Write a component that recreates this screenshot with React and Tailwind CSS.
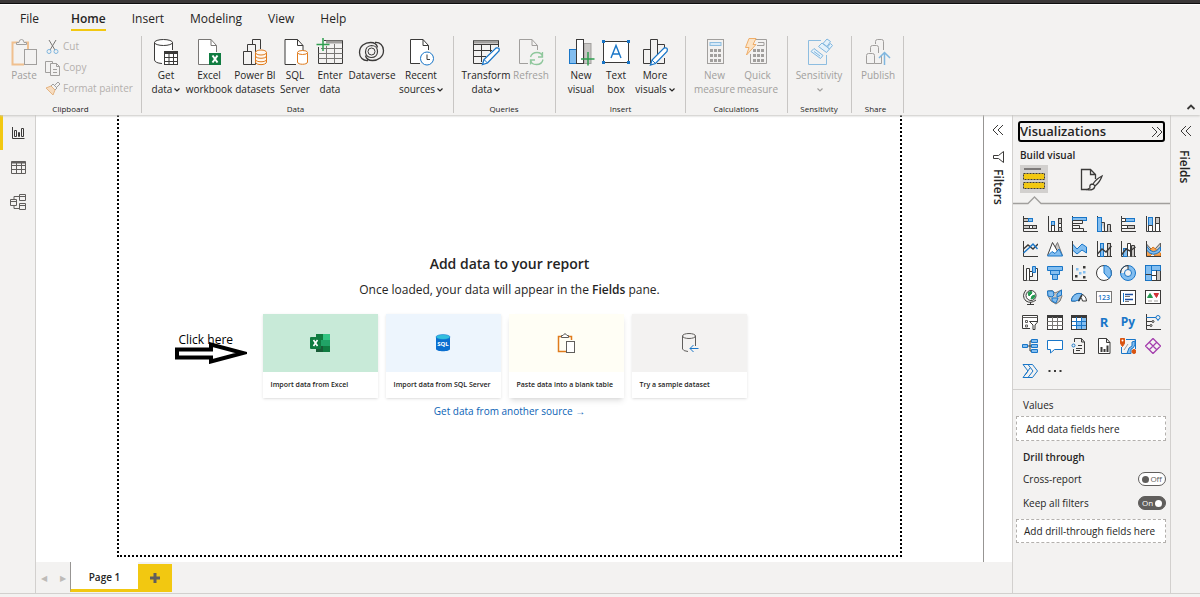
import { useState } from "react";

const K = "#3b3a39";
const B = "#1976c8";
const L = "#83bef0";
const G = "#c8c6c4";
const O = "#e07b1c";

const Icon = ({ size = 28, className = "", children }) => (
  <svg
    xmlns="http://www.w3.org/2000/svg"
    viewBox={`0 0 ${size} ${size}`}
    width={size}
    height={size}
    fill="none"
    stroke={K}
    className={`shrink-0 ${className}`}
    aria-hidden="true"
  >
    {children}
  </svg>
);

const swirl = "M10 22.500C5 23 1.500 19.500 1.500 14.500C1.500 8 7 4.500 12.500 4.500C17 4.500 19 7 19.500 9.500";

const ribbonIcons = {
  paste: (
    <Icon>
      <path d="M8.500 4.500H2.500V26.500H14M18 11V4.500H15" stroke="#f0c08f" strokeWidth="2" />
      <path d="M6.500 6.500V4.500H9Q9 1.500 11.500 1.500T14 4.500H16.500V6.500Z" fill="#f3f2f1" stroke="#a19f9d" />
      <rect x="14.500" y="11.500" width="12" height="15" fill="#f3f2f1" stroke="#a19f9d" />
    </Icon>
  ),
  getData: (
    <Icon>
      <path d="M2.500 4.500V22Q3 25 10 25.500H20.500V4.500" fill="white" stroke="none" />
      <ellipse cx="11.500" cy="4.500" rx="9" ry="3" fill="white" />
      <path d="M2.500 4.500V22Q3 25 10 25.500M20.500 4.500V12" />
      <rect x="12.500" y="13.500" width="13" height="13" fill="white" />
      <path d="M12.500 15H25.500" strokeWidth="2" />
      <path d="M12.500 19.500H25.500M12.500 23.500H25.500M17 15V26.500M21.500 15V26.500" />
    </Icon>
  ),
  excel: (
    <Icon>
      <path d="M21.500 14V7.500L16 1.500H3.500V26.500H14M16 1.500V7.500H21.500" stroke="#797775" fill="white" />
      <rect x="14" y="15" width="12" height="12" fill="#107c41" stroke="none" />
      <path d="M17.500 17.500L22.500 24.500M22.500 17.500L17.500 24.500" stroke="white" strokeWidth="2" />
    </Icon>
  ),
  datasets: (
    <Icon>
      <path d="M11.500 6.500V1.500H19.500V11M6.500 13V6.500H14.500V26.500H2.500V13.500H10.500V26" />
      <path d="M14.500 14.500V24C14.500 27.500 25.500 27.500 25.500 24V14.500" fill="#fff8f0" stroke={O} />
      <ellipse cx="20" cy="14.500" rx="5.500" ry="2.500" fill="#fff8f0" stroke={O} />
      <path d="M14.500 18C14.500 21 25.500 21 25.500 18M14.500 21.500C14.500 24.500 25.500 24.500 25.500 21.500" stroke={O} />
    </Icon>
  ),
  sql: (
    <Icon>
      <path d="M22 16V7.500L16.500 1.500H4V26.500H15M16.500 1.500V7.500H22" fill="white" />
      <path d="M16.500 14.500V24C16.500 27 26.500 27 26.500 24V14.500" fill="white" stroke={O} />
      <ellipse cx="21.500" cy="14.500" rx="5" ry="2" fill="white" stroke={O} />
    </Icon>
  ),
  enter: (
    <Icon>
      <path d="M8 2.500H26.500V25.500H2.500V9" />
      <path d="M10 4H26" stroke="#a19f9d" strokeWidth="3" />
      <path d="M5 10.500H26.500M2.500 15.500H26.500M2.500 20.500H26.500M10.500 8V25.500M18.500 6V25.500" stroke="#797775" />
      <path d="M0.500 6.500H13.500M7 0V13" stroke="#2f9e4f" strokeWidth="1.500" />
    </Icon>
  ),
  dataverse: (
    <Icon>
      <path d={swirl} strokeWidth="1.300" />
      <path d={swirl} transform="rotate(180 13.500 13.500)" strokeWidth="1.300" />
      <path d="M13.500 19.500C5.500 20 5.500 8 13.500 7.500C17 7.500 19.500 10 19.500 13.500C19.500 17 17 19.500 13.500 19.500" strokeWidth="1.200" />
      <circle cx="13.500" cy="13.500" r="3.500" />
    </Icon>
  ),
  recent: (
    <Icon>
      <path d="M21.500 12V7.500L16 1.500H3.500V25.500H13M16 1.500V7.500H21.500" fill="white" />
      <circle cx="20" cy="20.500" r="6.500" fill="white" stroke={B} />
      <path d="M20 16.500V21.500H23" />
    </Icon>
  ),
  transform: (
    <Icon>
      <path d="M26.500 9V2.500H1.500V25.500H10" />
      <path d="M2 4H26" stroke="#a19f9d" strokeWidth="3" />
      <path d="M1.500 6.500H26.500M1.500 12.500H20M1.500 18.500H14M9.500 6V24M18.500 6V14" />
      <path d="M10.500 26.500L12 21.500L24 10Q28 9 27 13L15.500 25Z" fill="white" stroke={B} strokeWidth="1.300" />
      <path d="M12 21.500L15.500 25" stroke={B} />
    </Icon>
  ),
  refresh: (
    <Icon>
      <path d="M20.500 12V7.500L15 1.500H2.500V25.500H11M15 1.500V7.500H20.500" stroke="#a19f9d" />
      <path d="M13.500 19Q15 14.500 20 14.500T25.500 19M25.500 14V19H21M26 21.500Q25 26.500 19.500 26.500T14 22.500M13.500 26.500V22H18" stroke="#8fc79c" strokeWidth="1.300" />
    </Icon>
  ),
  newVisual: (
    <Icon>
      <rect x="2.500" y="11.500" width="7" height="14" fill={L} stroke={B} />
      <rect x="17" y="5.500" width="7" height="20" fill={G} stroke="#a19f9d" />
      <rect x="9.500" y="1.500" width="7" height="24" fill="white" />
      <path d="M14 21H27.500M21 14V27.500" stroke="#2f9e4f" strokeWidth="1.500" />
    </Icon>
  ),
  textBox: (
    <Icon>
      <rect x="1.500" y="3.500" width="25" height="21" fill="white" />
      <path d="M9 20L14 7.500L19 20M10.500 16H17.500" stroke={B} strokeWidth="1.400" />
      <path d="M0 2h3v3H0zM25 2h3v3h-3zM0 23h3v3H0zM25 23h3v3h-3z" fill={B} stroke="none" />
    </Icon>
  ),
  more: (
    <Icon>
      <path d="M9 11.500H2.500V25.500H9.500M17 6.500H23.500V12M9.500 25.500V1.500H16.500V16M23.500 20V25.500H16" />
      <path d="M9.500 27L11 22L23 10Q27.500 9 26 13.500L14.500 25.500Z" fill="white" stroke={B} strokeWidth="1.300" />
      <path d="M11 22L14.500 25.500" stroke={B} />
    </Icon>
  ),
  newMeasure: (
    <Icon>
      <rect x="6.500" y="1.500" width="16" height="24" stroke="#a19f9d" />
      <rect x="9" y="4.500" width="11" height="3" fill="#d5e9f8" stroke="#8dbde0" />
      <path d="M9 12.500H20M9 17.500H20M9 22.500H20" stroke="#a19f9d" strokeWidth="3" strokeDasharray="3 1" />
    </Icon>
  ),
  quick: (
    <Icon>
      <path d="M11 1.500H22.500V25.500H6.500V16M14 4.500H20V7.500H13" stroke="#a19f9d" />
      <path d="M9 12.500H20M9 17.500H20M9 22.500H20" stroke="#a19f9d" strokeWidth="3" strokeDasharray="3 1" />
      <path d="M5 0.500H12L9 6.500H12L2.500 17L5 9.500H1.500Z" fill="#fbe3c5" stroke="#efad68" />
    </Icon>
  ),
  sensitivity: (
    <Icon>
      <path d="M16 2.500H3.500V26.500H21.500V17" stroke="#8dbde0" />
      <g stroke="#7fb6df" fill="#e4f1fa">
        <path d="M6 13.500L9 10.500L18 17.500L15.500 20.500Z" />
        <path d="M9 13.500L15 18" />
        <path d="M13.500 8.500L17 5L24.500 11L21.500 14.500Z" />
        <path d="M18 5.500L22 1L25.500 3.500L22 8.500ZM22.500 9L25.500 5.500L27.500 7.500L24.500 11Z" />
      </g>
    </Icon>
  ),
  publish: (
    <Icon>
      <path d="M11.500 6V3.500Q11.500 1.500 13.500 1.500H17.500Q19.500 1.500 19.500 3.500V12M6.500 14V9.500Q6.500 7.500 8.500 7.500H12.500Q14.500 7.500 14.500 9.500V15M2.500 25.500V17.500Q2.500 15.500 4.500 15.500H8.500Q10.500 15.500 10.500 17.500V25.500ZM10.500 25.500H17.500V18" stroke="#a19f9d" />
      <path d="M20.500 27V14.500M15 20L20.500 14.500L26 20" stroke="#7fb6df" strokeWidth="1.500" />
    </Icon>
  ),
};

const Chevron = () => (
  <svg viewBox="0 0 6 4" width="6" height="4" fill="none" stroke="currentColor" className="mb-px ml-0.5 inline-block" aria-hidden="true">
    <path d="M0.500 0.500L3 3L5.500 0.500" strokeWidth="1.200" />
  </svg>
);

const groups = [
  {
    name: "Data",
    box: "w-[311px] pl-1",
    items: [
      { icon: "getData", top: "Get", bottom: "data", menu: true, w: "w-10" },
      { icon: "excel", top: "Excel", bottom: "workbook", w: "w-[46px]" },
      { icon: "datasets", top: "Power BI", bottom: "datasets", w: "w-[46px]" },
      { icon: "sql", top: "SQL", bottom: "Server", w: "w-[34px]" },
      { icon: "enter", top: "Enter", bottom: "data", w: "w-9" },
      { icon: "dataverse", top: "Dataverse", w: "w-12" },
      { icon: "recent", top: "Recent", bottom: "sources", menu: true, w: "w-[50px]" },
    ],
  },
  {
    name: "Queries",
    box: "w-[101px] pl-[7px]",
    items: [
      { icon: "transform", top: "Transform", bottom: "data", menu: true, w: "w-[50px]" },
      { icon: "refresh", top: "Refresh", off: true, w: "w-10" },
    ],
  },
  {
    name: "Insert",
    box: "w-[129px] pl-2",
    items: [
      { icon: "newVisual", top: "New", bottom: "visual", w: "w-[34px]" },
      { icon: "textBox", top: "Text", bottom: "box", w: "w-9" },
      { icon: "more", top: "More", bottom: "visuals", menu: true, w: "w-[42px]" },
    ],
  },
  {
    name: "Calculations",
    box: "w-[101px] pl-[7px]",
    items: [
      { icon: "newMeasure", top: "New", bottom: "measure", off: true, w: "w-[43px]" },
      { icon: "quick", top: "Quick", bottom: "measure", off: true, w: "w-[43px]" },
    ],
  },
  {
    name: "Sensitivity",
    box: "w-[63px] pl-[7px]",
    items: [{ icon: "sensitivity", top: "Sensitivity", bottom: "", menu: true, off: true, w: "w-12" }],
  },
  {
    name: "Share",
    box: "w-[51px] pl-1",
    items: [{ icon: "publish", top: "Publish", off: true, w: "w-11" }],
  },
];

function RibbonButton({ icon, top, bottom, menu, off, w }) {
  return (
    <button type="button" disabled={off} className={`flex flex-col items-center pt-0.5 ${w} ${off ? "text-[#a19f9d]" : "text-[#252423]"}`}>
      {ribbonIcons[icon]}
      <span className="mt-0.5 text-[10px] leading-[14px] whitespace-nowrap">
        {top}
        <br />
        {bottom}
        {menu && <Chevron />}
      </span>
    </button>
  );
}

function RibbonGroup({ name, box, children }) {
  return (
    <section className={`flex h-[79px] shrink-0 flex-col ${box}`}>
      <div className="flex h-[67px] items-start">{children}</div>
      <h2 className="pr-2 text-center text-[8px] leading-[12px]">{name}</h2>
    </section>
  );
}

const Divider = () => <div className="h-[77px] w-px shrink-0 bg-[#c8c6c4]" />;

const visuals = [
  ["Stacked bar chart", <><path d="M1.500 0V15.500H16" /><rect x="1.500" y="2.500" width="5" height="3" fill={G} /><rect x="6.500" y="2.500" width="4" height="3" fill={L} stroke={B} /><rect x="1.500" y="9.500" width="13" height="3" fill={G} /><path d="M7.500 9.500h3v3h-3z" fill="white" /></>],
  ["Stacked column chart", <><path d="M1.500 0V15.500H16" /><rect x="4.500" y="5.500" width="3" height="4" fill={L} stroke={B} /><rect x="4.500" y="9.500" width="3" height="6" fill="white" /><rect x="11.500" y="2.500" width="3" height="13" fill={G} /><path d="M11.500 7.500h3v4h-3z" fill="white" /></>],
  ["Clustered bar chart", <><path d="M1.500 0V15.500H16" /><rect x="1.500" y="1.500" width="14" height="3" fill={L} stroke={B} /><path d="M1.500 4.500H11.500V7.500H1.500M1.500 9.500H8.500V12.500H1.500M1.500 12.500H12.500V15.500" /></>],
  ["Clustered column chart", <><path d="M1.500 0V15.500H16" /><rect x="1.500" y="1.500" width="4" height="14" fill={L} stroke={B} /><path d="M5.500 6.500H8.500V15.500M11.500 15.500V8.500H14.500V15.500" fill={G} /></>],
  ["100% stacked bar chart", <><path d="M1.500 0V15.500H16" /><rect x="1.500" y="2.500" width="13" height="3" fill={L} stroke={B} /><rect x="1.500" y="9.500" width="13" height="3" fill={G} /><path d="M1.500 2.500h4v3h-4zM1.500 9.500h6v3h-6z" fill="white" /></>],
  ["100% stacked column chart", <><path d="M1.500 0V15.500H16" /><rect x="3.500" y="1.500" width="4" height="14" fill={L} stroke={B} /><rect x="10.500" y="1.500" width="4" height="14" fill={G} /><path d="M3.500 9.500h4v6h-4zM10.500 7.500h4v8h-4z" fill="white" /></>],
  ["Line chart", <><path d="M1.500 0V15.500H16" /><path d="M1.500 8L6 4L11 8L16 3" strokeWidth="1.400" /><path d="M1.500 12L7 7L11 3L15.500 8" stroke={B} strokeWidth="1.400" /></>],
  ["Area chart", <><path d="M6 10L10.500 1.500L15.500 14.500H8" fill={G} stroke="#797775" /><path d="M0.500 14.500L5.500 1.500L11 11" fill="white" /><path d="M0.500 15L5 10.500L8 12.500L12 8L15.500 15Z" fill={L} stroke={B} /></>],
  ["Stacked area chart", <><path d="M1.500 3L6 8L11 3L15.500 6V12L11 9L6 13L1.500 9Z" fill={L} stroke={B} /><path d="M1.500 0V15.500H16" /></>],
  ["Line and stacked column chart", <><path d="M1.500 0V15.500H16" /><rect x="4.500" y="2.500" width="3" height="13" fill={L} stroke={B} /><rect x="11.500" y="2.500" width="3" height="13" fill={G} /><path d="M1.500 13L6 8L10 11L15.500 5" strokeWidth="1.400" /></>],
  ["Line and clustered column chart", <><path d="M1.500 0V15.500H16" /><rect x="3.500" y="7.500" width="4" height="8" fill={L} stroke={B} /><path d="M7.500 15.500V2.500H10.500V15.500" fill="white" /><path d="M11.500 15.500V4.500H14.500V15.500" fill={G} /><path d="M1.500 14L6 8L10 10L15.500 6" strokeWidth="1.400" /></>],
  ["Ribbon chart", <><path d="M1.500 3L6 8H10L15.500 2V6L10 11H6L1.500 7Z" fill={G} stroke="#605e5c" /><path d="M1.500 9H5L8 6L15.500 12V15H10L8 12L5 15H1.500Z" fill="#f5a455" stroke={O} /><path d="M1.500 5Q8 16 15.500 6V10Q8 17 1.500 9Z" fill={L} stroke={B} /><path d="M1.500 0V15.500H16" /></>],
  ["Waterfall chart", <><path d="M1.500 0V15.500H16" /><path d="M4.500 15.500V3.500H7.500V15.500M7.500 6.500H10.500V11.500H7.500M13.500 3.500H15.500V15.500H13.500" fill="white" /><path d="M10.500 1.500h3v6h-3z" fill={L} stroke={B} /></>],
  ["Funnel chart", <><path d="M0.500 1.500h15v4H0.500zM3.500 5.500h9v4h-9zM5.500 9.500h5v5h-5z" fill={L} stroke={B} /></>],
  ["Scatter chart", <><path d="M1.500 0V15.500H16" /><path d="M4 10h2.500v2.500H4zM12 1h2.500v2.500H12zM12 11h2.500v2.500H12z" fill={K} stroke="none" /><path d="M5 3h2.500v2.500H5zM8 7h2.500v2.500H8zM12 6h2.500v2.500H12z" fill={L} stroke="none" /></>],
  ["Pie chart", <><circle cx="8" cy="8" r="7.500" fill="white" /><path d="M8 0.500V8L13 13.500A7.500 7.500 0 0 0 8 0.500Z" fill={L} stroke={B} /></>],
  ["Donut chart", <><circle cx="8" cy="8" r="5.500" stroke={L} strokeWidth="4" /><path d="M2.500 8A5.500 5.500 0 0 1 8 2.500" stroke="#f3f2f1" strokeWidth="4" /><circle cx="8" cy="8" r="7.500" stroke={B} /><circle cx="8" cy="8" r="3.500" stroke={B} /><path d="M0.500 8A7.500 7.500 0 0 1 8 0.500V4.500" /></>],
  ["Treemap", <><rect x="0.500" y="0.500" width="15" height="15" fill="white" /><path d="M0.500 0.500h6v15h-6zM6.500 0.500h9v5h-9z" fill={L} stroke={B} /><path d="M6.500 10.500H11M11.500 5.500V15.500M0.500 9.500H6.500" /><rect x="12" y="6" width="3" height="9" fill={G} stroke="none" /></>],
  ["Map", <><circle cx="9" cy="6.500" r="5" fill="white" /><path d="M6 4l3-2 1 2-3 3zM10 7l3-1-1 3-3 1z" fill="#249a50" stroke="#249a50" /><path d="M4 1Q-1 7 4 12Q9 15 14 11M8.500 13V15.500M5 15.500H12" /></>],
  ["Filled map", <><path d="M0.500 2L5 1.500L8 4L14.500 1V6L15 7L13 12L9 15L4 12L1 7Z" fill={G} stroke="#797775" /><path d="M0.500 2L6 2L7 6L5 8L1 7ZM10 5L14.500 1V6L10 8ZM5 9L11 9L9 14L5 12Z" fill={L} stroke={B} /></>],
  ["Gauge", <><path d="M0.500 12A7.500 7.500 0 0 1 15.500 12H11.500A3.500 3.500 0 0 0 4.500 12Z" fill="white" /><path d="M0.500 12A7.500 7.500 0 0 1 11 5L8 12A3 3 0 0 0 4.500 12Z" fill={L} stroke={B} /><path d="M7.500 12L11 6" strokeWidth="1.500" /></>],
  ["Card", <><rect x="0.500" y="2.500" width="15" height="11" stroke="#797775" fill="white" /><text x="8" y="11" textAnchor="middle" fontSize="7" fontWeight="600" fill={B} stroke="none">123</text></>],
  ["Multi-row card", <><rect x="0.500" y="1.500" width="15" height="14" fill="white" /><path d="M3.500 4V13" stroke={B} /><path d="M5 7.500H10M5 12.500H9" stroke="#797775" /><path d="M5 5.500H13M5 10.500H13" stroke="#1b4ea0" strokeWidth="1.500" /></>],
  ["KPI", <><rect x="0.500" y="1.500" width="15" height="13" fill="white" /><path d="M2.500 8.500L5 4.500L7.500 8.500Z" fill="#249a50" stroke="#249a50" /><path d="M9 4.500H13.500L11.500 8.500Z" fill="#d13438" stroke="#d13438" /><path d="M3 12H7M9 12H13" stroke="#a19f9d" /></>],
  ["Slicer", <><path d="M8 14.500H0.500V1.500H15.500V7" fill="white" /><path d="M0.500 3.500H15.500M3.500 6.500h2v2h-2zM3.500 11h2v2h-2z" stroke="#605e5c" /><path d="M7.500 7.500H16L13 11V15.500H11V11Z" fill="white" /></>],
  ["Table", <><rect x="0.500" y="1.500" width="15" height="14" fill="white" /><path d="M0.500 3H15.500" strokeWidth="2" /><path d="M0.500 7.500H15.500M0.500 11.500H15.500M5.500 3V15.500M10.500 3V15.500" stroke="#797775" /></>],
  ["Matrix", <><rect x="0.500" y="1.500" width="15" height="14" fill="white" /><path d="M6 8h9v7H6zM11 4h4v4h-4z" fill={L} stroke="none" /><path d="M0.500 3H15.500" strokeWidth="2" /><path d="M0.500 7.500H15.500M0.500 11.500H15.500M5.500 3V15.500M10.500 3V15.500" stroke={B} /><rect x="0.500" y="1.500" width="15" height="14" /></>],
  ["R script visual", <text x="8" y="13" textAnchor="middle" fontSize="13" fontWeight="700" fill={B} stroke="none">R</text>],
  ["Python visual", <text x="8" y="12" textAnchor="middle" fontSize="12" fontWeight="700" fill={B} stroke="none">Py</text>],
  ["Key influencers", <><path d="M1.500 0V15.500H16" /><path d="M1.500 3.500H11M13 5V7" stroke={B} /><circle cx="13" cy="3.500" r="2" stroke={B} /><path d="M1.500 7.500H7M1.500 11.500H5" /><circle cx="8" cy="7.500" r="1" /><circle cx="6" cy="11.500" r="1" /></>],
  ["Decomposition tree", <><path d="M5 8H8M10 3H8V13H10M8 8H10" /><path d="M0.500 6.500h5v3h-5zM9.500 1.500h6v3h-6zM9.500 6.500h6v3h-6zM9.500 11.500h6v3h-6z" fill={L} stroke={B} /></>],
  ["Q&A", <path d="M0.500 2.500H15.500V11.500H7.500L3.500 15V11.500H0.500Z" fill="white" stroke={B} />],
  ["Smart narrative", <><path d="M3.500 4V0.500H10.500L13.500 4V15.500H2.500V11M10.500 0.500V4H13.500M7 7.500H11M5 10.500H11M5 12.500H9" /><circle cx="2.500" cy="7.500" r="1.500" stroke={B} /></>],
  ["Paginated report", <><path d="M2.500 0.500H10.500L14 4.500V15.500H2.500ZM10.500 0.500V4.500H14" fill="white" /><path d="M5.500 9V14M8.500 11V14M11.500 7.500V14" strokeWidth="2" /></>],
  ["ArcGIS map", <><path d="M6 1.500H15.500V11M1.500 9V15.500H11" stroke={B} /><path d="M7 15.500L9 10L12 8V4L15 3V7L13 10L11 11V15.500Z" fill={L} stroke={B} /><path d="M0.500 0.500h4v5l-2 3l-2-3z" fill="#d9530f" stroke="#d9530f" /><circle cx="2.500" cy="2.500" r="1" fill="white" stroke="none" /><circle cx="14" cy="13.500" r="2" fill="#d9530f" stroke="#d9530f" /><path d="M4 12L8 6" stroke="#a19f9d" /></>],
  ["Power Apps", <path d="M8 0.500L15.500 8L8 15.500L0.500 8ZM4.500 4.500L11.500 11.500M11.500 4.500L8 8M4.500 11.500L8 8" stroke="#a43fae" strokeWidth="1.300" strokeLinejoin="round" />],
  ["Power Automate", <path d="M1 1.500H10.500L15.500 8L10.500 14.500H1L6 8ZM6 1.500L11 8L6 14.500M3 12L8 5" stroke={B} />],
  ["More options", <path d="M1.500 8h2M7 8h2M12.500 8h2" strokeWidth="2" />],
];

const cards = [
  {
    label: "Import data from Excel",
    top: "bg-[#c8ead8]",
    shadow: "shadow",
    icon: (
      <Icon size={22}>
        <path d="M7 2h14v18H7z" fill="#21a366" stroke="none" />
        <path d="M7 2h7v6H7zM14 14h7v6h-7z" fill="#107c41" stroke="none" />
        <path d="M14 2h7v6h-7z" fill="#33c481" stroke="none" />
        <path d="M7 14h7v6H7z" fill="#185c37" stroke="none" />
        <rect x="1" y="5" width="11" height="12" rx="1" fill="#107c41" stroke="none" />
        <path d="M4.500 8L8.500 14M8.500 8L4.500 14" stroke="white" strokeWidth="1.600" />
      </Icon>
    ),
  },
  {
    label: "Import data from SQL Server",
    top: "bg-[#edf5fd]",
    shadow: "shadow",
    icon: (
      <Icon size={22}>
        <path d="M4 5V17C4 20 18 20 18 17V5Z" fill="#0b6fd0" stroke="none" />
        <ellipse cx="11" cy="5" rx="7" ry="2.500" fill="#32bedd" stroke="#0b6fd0" strokeWidth="0.500" />
        <text x="11" y="14" textAnchor="middle" fontSize="6" fontWeight="700" fill="white" stroke="none">SQL</text>
      </Icon>
    ),
  },
  {
    label: "Paste data into a blank table",
    top: "bg-[#fffef5]",
    shadow: "shadow-md",
    icon: (
      <Icon size={22}>
        <path d="M7 4.500H3.500V19.500H11M16.500 8V4.500H13" stroke={O} strokeWidth="1.500" />
        <path d="M6.500 5.500V3.500H8Q10 0 12 3.500H13.500V5.500Z" fill="white" stroke="#605e5c" />
        <rect x="11.500" y="9.500" width="8" height="11" fill="white" stroke="#605e5c" />
      </Icon>
    ),
  },
  {
    label: "Try a sample dataset",
    top: "bg-[#f3f2f1]",
    shadow: "shadow",
    icon: (
      <Icon size={22}>
        <ellipse cx="11" cy="4" rx="6.500" ry="2.500" stroke="#605e5c" />
        <path d="M4.500 4V17Q5 19 10 19.500M17.500 4V14" stroke="#605e5c" />
        <path d="M20.500 16.500H12M15.500 13L12 16.500L15.500 20" stroke={B} />
      </Icon>
    ),
  },
];

const DoubleChevron = ({ right }) => (
  <svg viewBox="0 0 12 12" width="12" height="12" fill="none" stroke={K} aria-hidden="true">
    {right ? <path d="M1 1L6 6L1 11M6 1L11 6L6 11" /> : <path d="M6 1L1 6L6 11M11 1L6 6L11 11" />}
  </svg>
);

function Toggle({ id, label, checked, onChange }) {
  return (
    <div className="flex h-6 items-center justify-between pl-[7px]">
      <label htmlFor={id}>{label}</label>
      <span className="relative flex h-[14px] w-7">
        <input
          id={id}
          type="checkbox"
          role="switch"
          checked={checked}
          onChange={(e) => onChange(e.target.checked)}
          className="h-[14px] w-7 appearance-none rounded-full border border-[#605e5c] bg-white checked:bg-[#605e5c]"
        />
        <span
          className={`pointer-events-none absolute inset-0 flex items-center justify-between px-1 text-[8px] leading-none ${
            checked ? "flex-row-reverse text-white" : "text-[#605e5c]"
          }`}
        >
          <span className={`size-[7px] rounded-full ${checked ? "bg-white" : "bg-[#605e5c]"}`} />
          {checked ? "On" : "Off"}
        </span>
      </span>
    </div>
  );
}

export default function App() {
  const [crossReport, setCrossReport] = useState(false);
  const [keepFilters, setKeepFilters] = useState(true);

  return (
    <div className="flex min-h-screen flex-col bg-[#f3f2f1] font-['Open_Sans',sans-serif] text-[#252423]">
      <div className="h-1 border-b border-black bg-[#3b3838]" />

      {/* Ribbon */}
      <header className="relative z-10 border-t border-white shadow-[0_1px_2px_#c8c6c4]">
        <nav className="flex h-[31px] items-start gap-[26px] pt-1 pl-5 text-[12px] leading-5">
          <button type="button" className="pr-1.5">File</button>
          <button type="button" className="border-b-2 border-[#f2c811] font-semibold">Home</button>
          <button type="button">Insert</button>
          <button type="button">Modeling</button>
          <button type="button">View</button>
          <button type="button">Help</button>
        </nav>
        <div className="flex">
          <RibbonGroup name="Clipboard" box="w-[141px] pl-2">
            <button type="button" disabled className="flex w-8 flex-col items-center pt-0.5 text-[10px] leading-[14px] text-[#a19f9d]">
              {ribbonIcons.paste}
              <span className="mt-0.5">Paste</span>
            </button>
            <div className="ml-[5px] flex flex-col text-[10px] leading-[21px] text-[#b3b0ad]">
              <button type="button" disabled className="flex items-center gap-0.5">
                <Icon size={16}>
                  <path d="M4 1L10 11M11 1L5 11" stroke="#797775" />
                  <circle cx="4" cy="12.500" r="2" stroke="#7fb6df" />
                  <circle cx="11" cy="12.500" r="2" stroke="#7fb6df" />
                </Icon>
                Cut
              </button>
              <button type="button" disabled className="flex items-center gap-0.5">
                <Icon size={16}>
                  <path d="M5 12.500H0.500V1.500H7.500V3M5.500 3.500H11.500L14.500 6.500V15.500H5.500ZM11.500 3.500V6.500H14.500M8 9.500H12M8 12.500H12" stroke="#a19f9d" />
                </Icon>
                Copy
              </button>
              <button type="button" disabled className="flex items-center gap-0.5 whitespace-nowrap">
                <Icon size={16}>
                  <path d="M1 7L6 5L10 9L8 14Z" fill="#f6dcc0" stroke="#e5b482" />
                  <path d="M6 5L8 3L12 7L10 9M10 4L13 1L15 3L12 6" stroke="#a19f9d" />
                </Icon>
                Format painter
              </button>
            </div>
          </RibbonGroup>
          {groups.map((g) => (
            <div key={g.name} className="flex">
              <Divider />
              <RibbonGroup name={g.name} box={g.box}>
                {g.items.map((item) => (
                  <RibbonButton key={item.icon} {...item} />
                ))}
              </RibbonGroup>
            </div>
          ))}
          <Divider />
          <button type="button" aria-label="Collapse ribbon" className="mr-1 mb-1 ml-auto self-end">
            <svg viewBox="0 0 10 8" width="10" height="8" fill="none" stroke={K} strokeWidth="1.800">
              <path d="M1.500 6L5 2.500L8.500 6" />
            </svg>
          </button>
        </div>
      </header>

      <main className="flex flex-1 border-b border-[#d2d0ce]">
        {/* View switcher */}
        <nav className="flex w-9 shrink-0 flex-col border-r border-[#d2d0ce]">
          <button type="button" aria-label="Report" className="flex h-[35px] items-center border-l-3 border-[#f2c811] pl-2">
            <Icon size={14}>
              <path d="M1.500 1V12.500H13.500" />
              <path d="M3.500 4.500h2v6h-2zM7.500 6.500h1v4h-1zM10.500 2.500h2v8h-2z" />
            </Icon>
          </button>
          <button type="button" aria-label="Data" className="flex h-[35px] items-center pl-[11px]">
            <Icon size={16}>
              <g stroke="#605e5c">
                <path d="M0.500 1.500h14v12H0.500zM0.500 5.500h14M0.500 9.500h14M5.500 3v10M10.500 3v10" />
                <path d="M0.500 2.500h14" strokeWidth="2" />
              </g>
            </Icon>
          </button>
          <button type="button" aria-label="Model" className="flex h-[35px] items-center pl-2.5">
            <Icon size={17}>
              <path d="M0.500 5.500h6v6h-6zM0.500 7.500h6M9.500 0.500h6v6h-6zM9.500 2.500h6M9.500 9.500h6v6h-6zM9.500 11.500h6M4 5V2.500h5M4 12v2.500h5" stroke="#605e5c" />
            </Icon>
          </button>
        </nav>

        <div className="flex min-w-0 flex-1 flex-col">
          <div className="flex flex-1 bg-white">
            {/* Report canvas */}
            <div className="flex flex-1 flex-col px-[81px] pb-[5px]">
              <div className="flex flex-1 flex-col items-center border-2 border-t-0 border-dotted border-black pt-[139px]">
                <h1 className="text-[14px] leading-5 font-semibold">Add data to your report</h1>
                <p className="mt-1.5 text-[12px] leading-5">
                  Once loaded, your data will appear in the <b className="font-semibold">Fields</b> pane.
                </p>
                <div className="relative mt-3.5 mr-2.5 flex gap-2">
                  {cards.map((card) => (
                    <button key={card.label} type="button" className={`w-[115px] bg-white text-left ${card.shadow}`}>
                      <span className={`flex h-[58px] items-center justify-center ${card.top}`}>{card.icon}</span>
                      <span className="block pl-2 text-[7px] leading-[26px] font-semibold whitespace-nowrap">{card.label}</span>
                    </button>
                  ))}
                  <div className="absolute top-4 right-full mr-4 text-[12px] leading-5 text-black">
                    <span className="pl-1">Click here</span>
                    <svg viewBox="0 0 72 22" width="72" height="22" className="-mt-2" fill="none" stroke="black" strokeWidth="4" aria-hidden="true">
                      <path d="M2 7.500H36V2.500L68 11L36 19.500V15.500H2Z" />
                    </svg>
                  </div>
                </div>
                <a href="#sources" className="mt-[3px] text-[10px] leading-5 text-[#0a62b5]">
                  Get data from another source →
                </a>
              </div>
            </div>

            <aside className="flex w-[29px] shrink-0 flex-col items-center border-l border-[#979593] pt-[9px]">
              <button type="button" aria-label="Expand filters"><DoubleChevron /></button>
              <Icon size={12} className="mt-[15px]">
                <path d="M11.500 0.500V11.500L6.500 7.500H1.500V4.500H6.500Z" />
              </Icon>
              <h2 className="mt-1.5 text-[12px] leading-4 font-semibold [writing-mode:vertical-rl]">Filters</h2>
            </aside>
          </div>

          {/* Page tabs */}
          <div className="flex h-[31px] items-stretch">
            <button type="button" disabled aria-label="Previous page" className="w-4 text-center text-[8px] text-[#bebbb8]">◀</button>
            <button type="button" disabled aria-label="Next page" className="w-[18px] pr-1 text-right text-[8px] text-[#bebbb8]">▶</button>
            <button type="button" className="mb-px w-[68px] border-b-3 border-l border-b-[#f2c811] border-l-[#979593] bg-white pt-1 text-[10px] font-semibold">
              Page 1
            </button>
            <button type="button" aria-label="New page" className="mt-0.5 mb-px flex w-[34px] items-center justify-center bg-[#f2c811]">
              <svg viewBox="0 0 10 10" width="10" height="10" stroke="#605e5c" strokeWidth="3">
                <path d="M5 0V10M0 5H10" />
              </svg>
            </button>
          </div>
        </div>

        {/* Visualizations pane */}
        <aside className="flex w-[159px] shrink-0 flex-col border-x border-[#d2d0ce] text-[10px]">
          <div className="mx-[5px] mt-1.5 flex h-[21px] items-center justify-between rounded-[3px] border-2 border-black text-[13px] font-semibold">
            <h2>Visualizations</h2>
            <button type="button" aria-label="Collapse visualizations"><DoubleChevron right /></button>
          </div>
          <h3 className="mt-[5px] pl-[7px] leading-4 font-semibold">Build visual</h3>
          <div className="mt-0.5 flex gap-[30px] pl-[7px]">
            <button type="button" aria-label="Build visual" className="flex size-7 items-center justify-center bg-[#d2d0ce]">
              <Icon size={24}>
                <path d="M2 2H19" stroke="#605e5c" strokeWidth="1.500" />
                <path d="M1.500 6.500h21v6h-21zM1.500 15.500h21v6h-21z" fill="#f2c811" strokeDasharray="2 1" />
              </Icon>
            </button>
            <button type="button" aria-label="Format visual" className="flex size-7 items-center justify-center">
              <Icon size={24}>
                <path d="M7 22.500H1.500V2.500H10.500L15.500 7.500V12M10.500 2.500V7.500H15.500" strokeWidth="1.300" />
                <path d="M22 9Q16 12 13 17L15 19Q20 15 22 9ZM13 17Q9 17 10 21L7 22.500Q14 24 15 19" strokeWidth="1.300" />
              </Icon>
            </button>
          </div>
          <svg viewBox="0 0 157 10" className="mt-0.5 h-2.5 w-full" fill="none" stroke="#a19f9d" aria-hidden="true">
            <path d="M0 8.500H15L21.500 2L28 8.500H157" strokeWidth="1.300" />
          </svg>
          <div className="mt-[7px] ml-[5px] grid h-[171px] w-[147px] grid-cols-6 grid-rows-7">
            {visuals.map(([name, art]) => (
              <button key={name} type="button" title={name} aria-label={name} className="flex items-center justify-center">
                <Icon size={16}>{art}</Icon>
              </button>
            ))}
          </div>
          <div className="mt-1.5 border-t border-[#d2d0ce] px-[3px] pt-[5px] pr-1">
            <h3 className="pl-[7px] leading-5">Values</h3>
            <div className="mt-px h-[25px] border border-dashed border-[#b3b0ad] bg-white pl-[9px] leading-6">Add data fields here</div>
            <h3 className="mt-1.5 pl-[7px] leading-5 font-semibold">Drill through</h3>
            <Toggle id="cross-report" label="Cross-report" checked={crossReport} onChange={setCrossReport} />
            <Toggle id="keep-filters" label="Keep all filters" checked={keepFilters} onChange={setKeepFilters} />
            <div className="mt-1 h-6 border border-dashed border-[#b3b0ad] bg-white pl-[7px] leading-[22px] whitespace-nowrap">Add drill-through fields here</div>
          </div>
        </aside>

        <aside className="flex w-[29px] shrink-0 flex-col items-center pt-2.5">
          <button type="button" aria-label="Expand fields"><DoubleChevron /></button>
          <h2 className="mt-[13px] mr-1 text-[12px] leading-4 font-semibold [writing-mode:vertical-rl]">Fields</h2>
        </aside>
      </main>
      <footer className="h-[3px]" />
    </div>
  );
}
